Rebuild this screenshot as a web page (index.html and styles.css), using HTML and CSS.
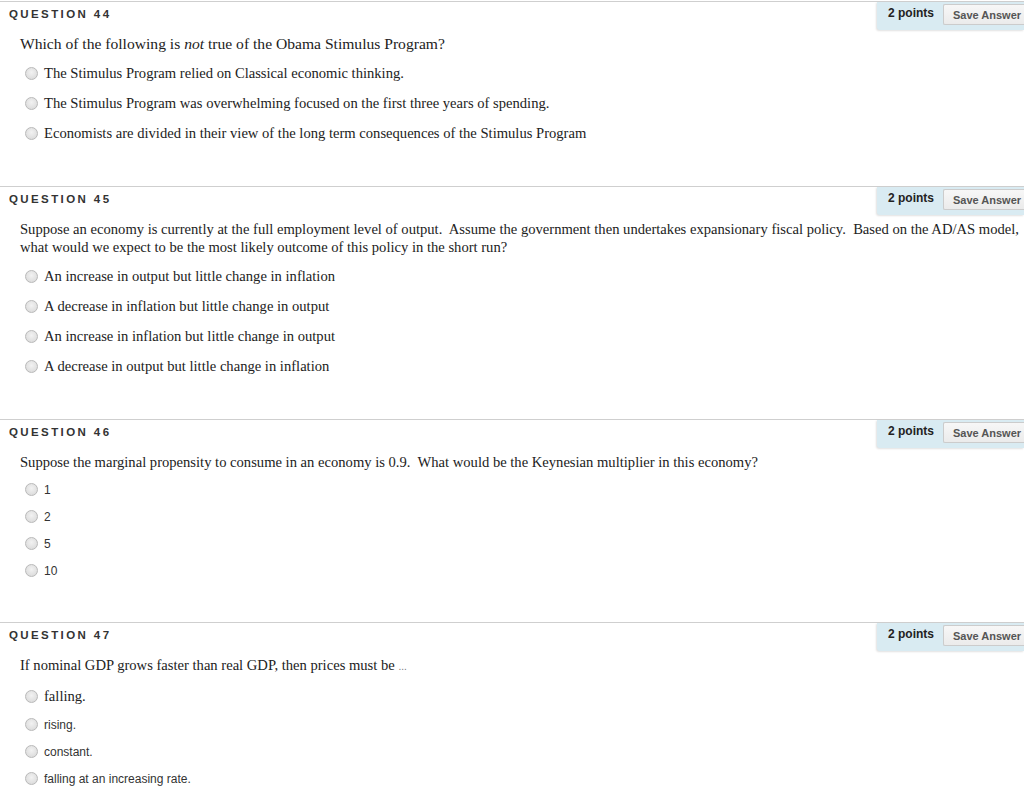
FILE: index.html
```html
<!DOCTYPE html>
<html>
<head>
<meta charset="utf-8">
<link rel="stylesheet" href="styles.css">
</head>
<body>
<div class="page">

<section class="question">
  <div class="q-head">
    <h3 class="q-title">QUESTION 44</h3>
    <div class="points-box"><span class="points">2 points</span><button class="save">Save Answer</button></div>
  </div>
  <div class="q-body">
    <p class="q-text q-text-large">Which of the following is <em>not</em> true of the Obama Stimulus Program?</p>
    <ul class="options">
      <li class="opt serif"><span class="radio"></span><span>The Stimulus Program relied on Classical economic thinking.</span></li>
      <li class="opt serif"><span class="radio"></span><span>The Stimulus Program was overwhelming focused on the first three years of spending.</span></li>
      <li class="opt serif"><span class="radio"></span><span>Economists are divided in their view of the long term consequences of the Stimulus Program</span></li>
    </ul>
  </div>
</section>

<section class="question">
  <div class="q-head">
    <h3 class="q-title">QUESTION 45</h3>
    <div class="points-box"><span class="points">2 points</span><button class="save">Save Answer</button></div>
  </div>
  <div class="q-body">
    <p class="q-text">Suppose an economy is currently at the full employment level of output.&nbsp; Assume the government then undertakes expansionary fiscal policy.&nbsp; Based on the AD/AS model,<br>what would we expect to be the most likely outcome of this policy in the short run?</p>
    <ul class="options">
      <li class="opt serif"><span class="radio"></span><span>An increase in output but little change in inflation</span></li>
      <li class="opt serif"><span class="radio"></span><span>A decrease in inflation but little change in output</span></li>
      <li class="opt serif"><span class="radio"></span><span>An increase in inflation but little change in output</span></li>
      <li class="opt serif"><span class="radio"></span><span>A decrease in output but little change in inflation</span></li>
    </ul>
  </div>
</section>

<section class="question">
  <div class="q-head">
    <h3 class="q-title">QUESTION 46</h3>
    <div class="points-box"><span class="points">2 points</span><button class="save">Save Answer</button></div>
  </div>
  <div class="q-body">
    <p class="q-text">Suppose the marginal propensity to consume in an economy is 0.9.&nbsp; What would be the Keynesian multiplier in this economy?</p>
    <ul class="options">
      <li class="opt sans"><span class="radio"></span><span>1</span></li>
      <li class="opt sans"><span class="radio"></span><span>2</span></li>
      <li class="opt sans"><span class="radio"></span><span>5</span></li>
      <li class="opt sans"><span class="radio"></span><span>10</span></li>
    </ul>
  </div>
</section>

<section class="question">
  <div class="q-head">
    <h3 class="q-title">QUESTION 47</h3>
    <div class="points-box"><span class="points">2 points</span><button class="save">Save Answer</button></div>
  </div>
  <div class="q-body">
    <p class="q-text">If nominal GDP grows faster than real GDP, then prices must be <span class="dots">...</span></p>
    <ul class="options">
      <li class="opt serif"><span class="radio"></span><span>falling.</span></li>
      <li class="opt sans"><span class="radio"></span><span>rising.</span></li>
      <li class="opt sans"><span class="radio"></span><span>constant.</span></li>
      <li class="opt sans"><span class="radio"></span><span>falling at an increasing rate.</span></li>
    </ul>
  </div>
</section>

</div>
</body>
</html>
```

FILE: styles.css
```css
html, body {
  margin: 0;
  padding: 0;
  background: #ffffff;
}

.page {
  width: 1024px;
  padding-top: 1px;
}

.question {
  border-top: 1px solid #cfcfcf;
  padding-bottom: 38px;
}

.q-head {
  display: flex;
  justify-content: space-between;
  align-items: flex-start;
  height: 28px;
}

.q-title {
  margin: 0;
  padding: 5px 0 0 9px;
  font-family: "Liberation Sans", Arial, sans-serif;
  font-weight: bold;
  font-size: 11.5px;
  line-height: 14px;
  letter-spacing: 2.4px;
  color: #333333;
}

.points-box {
  display: flex;
  align-items: flex-start;
  width: 136px;
  height: 26px;
  padding: 2px 0 0 11px;
  background: #d9ebf2;
  border-bottom-left-radius: 3px;
  box-shadow: -1px 1px 2px rgba(0, 0, 0, 0.12);
}

.points {
  font-family: "Liberation Sans", Arial, sans-serif;
  font-weight: bold;
  font-size: 12px;
  line-height: 18px;
  color: #222222;
  width: 55px;
}

.save {
  height: 21px;
  margin: 0;
  padding: 0 0 0 9px;
  flex: 1;
  text-align: left;
  border: 1px solid #cccccc;
  border-right: none;
  border-radius: 2px 0 0 2px;
  background: linear-gradient(#f7f7f7, #ebebeb);
  font-family: "Liberation Sans", Arial, sans-serif;
  font-weight: bold;
  font-size: 11px;
  color: #555555;
}

.q-body {
  padding-left: 20px;
}

.q-text {
  margin: 5px 0 0 0;
  font-family: "Liberation Serif", "Times New Roman", serif;
  font-size: 14.6px;
  line-height: 18px;
  color: #222222;
}

.q-text-large {
  font-size: 15.6px;
}

.dots {
  font-family: "Liberation Sans", Arial, sans-serif;
  font-size: 10px;
  color: #777777;
}

.options {
  list-style: none;
  margin: 5px 0 0 0;
  padding: 0;
}

.opt {
  display: flex;
  align-items: center;
  padding-left: 5px;
}

.opt.serif {
  height: 30px;
  font-family: "Liberation Serif", "Times New Roman", serif;
  font-size: 14.6px;
  color: #222222;
}

.opt.sans {
  height: 27px;
  font-family: "Liberation Sans", Arial, sans-serif;
  font-size: 12px;
  color: #333333;
}

.radio {
  width: 11px;
  height: 11px;
  border: 1px solid #b9b9b9;
  border-radius: 50%;
  background: radial-gradient(circle at 50% 40%, #f2f2f2, #d6d6d6);
  margin-right: 6px;
  flex: none;
}
```
